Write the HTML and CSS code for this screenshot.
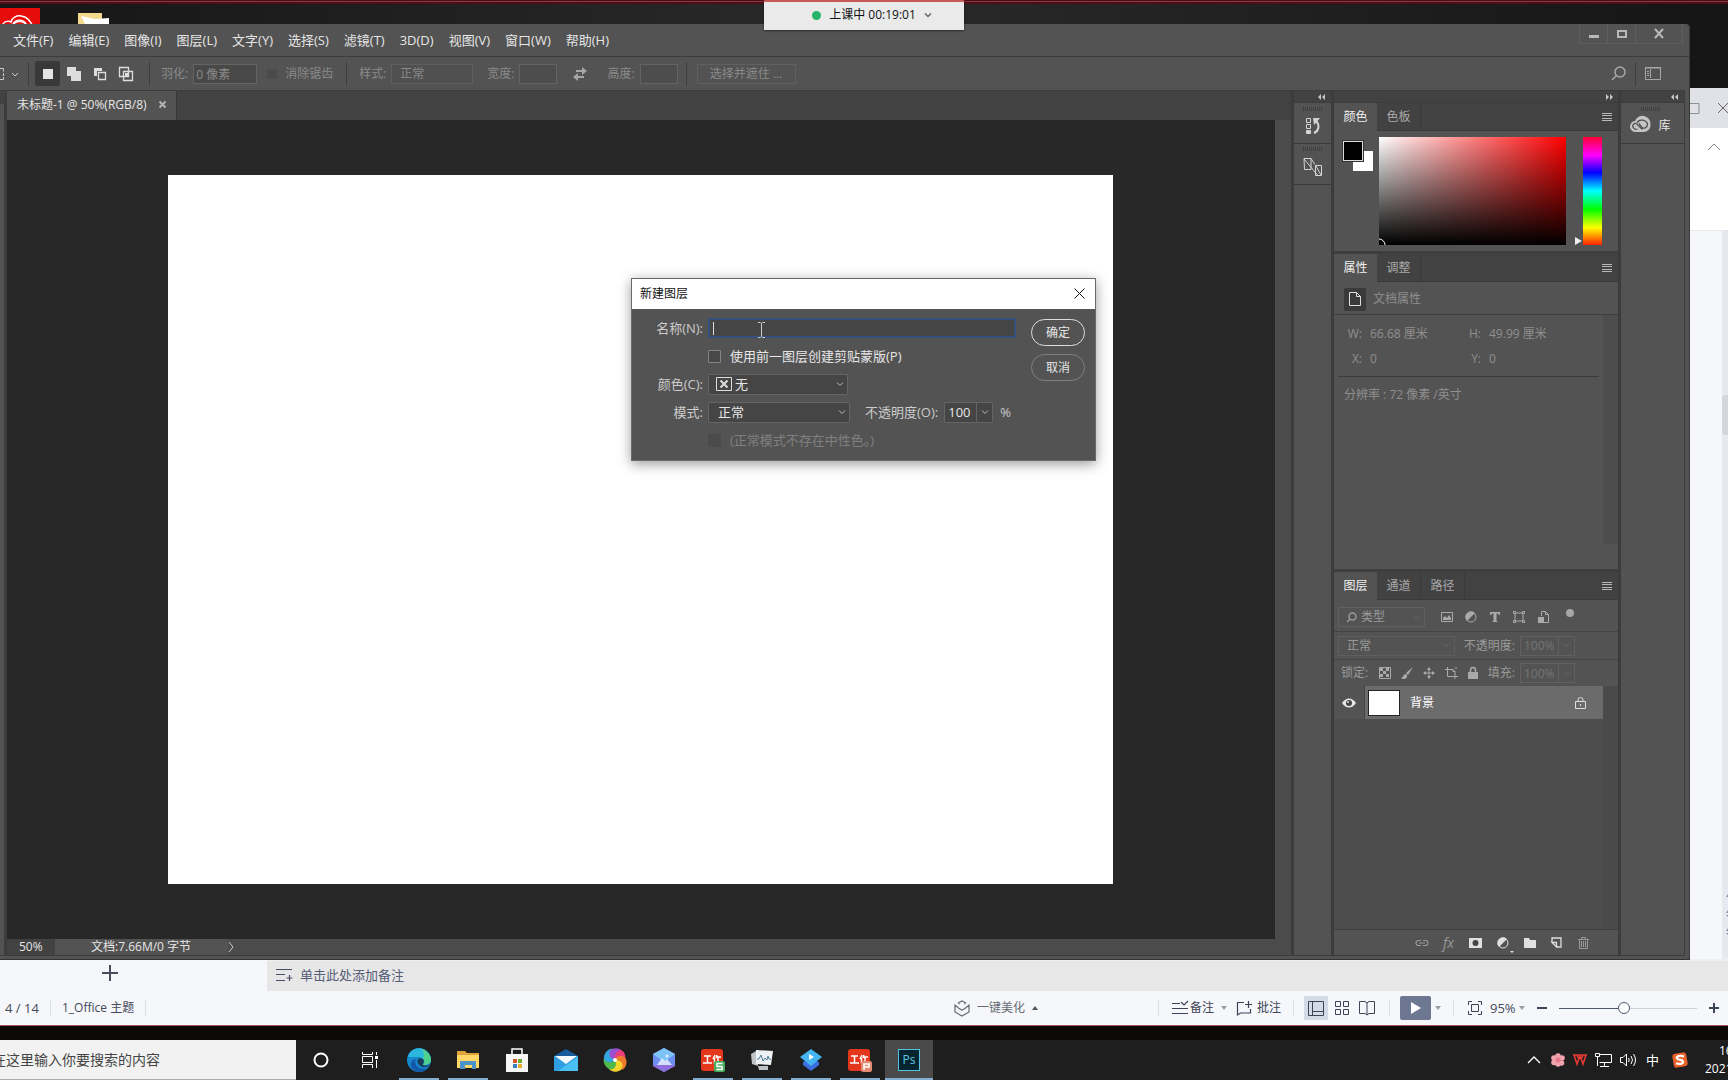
FILE: index.html
```html
<!DOCTYPE html>
<html lang="zh-CN">
<head>
<meta charset="utf-8">
<title>未标题-1 @ 50%(RGB/8)</title>
<link rel="stylesheet" href="styles.css">
</head>
<body>
<main class="desktop">
  <div class="desktop-icons">
    <svg class="app-tile" width="40" height="40" viewBox="0 0 40 40"><rect width="40" height="40" fill="#e60c0c"/><g fill="none" stroke="#fff" stroke-width="1.5"><path d="M2 18c2-6 8-5 9-4 2-9 18-9 22 6"/><path d="M3 20c3-4 7-4 9-1 3-8 14-7 17 2"/><path d="M13 16c3-5 10-5 13 0"/></g></svg>
    <svg class="folder-tile" width="32" height="32" viewBox="0 0 32 32"><path fill="#f3d98c" d="M0 4h24v24H0z"/><path fill="#fff" d="M3 7l14 3 14-1v20H14z"/></svg>
  </div>

  <section class="office">
    <header class="office-title">
      <svg width="38" height="40" viewBox="0 0 38 40" fill="none" stroke="#8b8f96"><path d="M-3 15.500h12v10H-3"/><path d="M28 15l10 10M28 25l10-10" stroke="#666"/></svg>
    </header>
    <div class="office-ribbon"><svg width="14" height="8" viewBox="0 0 14 8" fill="none" stroke="#80858c"><path d="M1 7l6-6 6 6"/></svg></div>
    <div class="office-main">
      <div class="office-scroll"><div class="office-thumb"></div><svg width="6" height="60" viewBox="0 0 6 60" fill="#8a93a3"><path d="M4 8l2-3v3zM4 24l2-3v3zM4 26h2v2zM4 42l2-3v3zM4 44h2v2z"/></svg></div>
    </div>
    <div class="office-notes">
      <button class="add-slide" aria-label="新建幻灯片"><svg width="16" height="16" viewBox="0 0 16 16" stroke="#474d5c" stroke-width="2"><path d="M8 0v16M0 8h16"/></svg></button>
      <div class="notes-field"><svg width="17" height="14" viewBox="0 0 17 14" fill="none" stroke="#474d66"><path d="M0 1.500h16M0 6.500h9M0 12.500h9M13.500 7v6M10.500 10h6" stroke-width="1.200"/></svg><span>单击此处添加备注</span></div>
    </div>
    <footer class="office-status">
      <div class="status-left"><span class="page-no">4 / 14</span><i class="bar"></i><span>1_Office 主题</span><i class="bar"></i></div>
      <button class="beautify"><svg width="16" height="17" viewBox="0 0 16 17" fill="none" stroke="#666b75" stroke-width="1.200"><path d="M1 5v7l7 4 7-4V5l-4 3.500-3 1.500-3-1.500zM4 3l4-2 4 2M4 3l2 1M12 3l-2 1"/></svg><span>一键美化</span><svg width="6" height="4" viewBox="0 0 6 4"><path fill="#555" d="M0 4l3-4 3 4z"/></svg></button>
      <div class="status-right">
        <i class="bar"></i>
        <button class="st-note"><svg width="17" height="14" viewBox="0 0 17 14" fill="none" stroke="#3d4458" stroke-width="1.200"><path d="M0 2.500h8M0 7.500h16M0 12.500h16M9 1l3 3 4-4"/></svg><span>备注</span><svg class="tri" width="6" height="4" viewBox="0 0 6 4"><path fill="#999ca3" d="M0 0h6L3 4z"/></svg></button>
        <button class="st-comment"><svg width="17" height="15" viewBox="0 0 17 15" fill="none" stroke="#3d4458" stroke-width="1.200"><path d="M8 1.500H1.500V14l3-2h10V8M12.500 0v7M9 3.500h7"/></svg><span>批注</span></button>
        <i class="bar"></i>
        <button class="view on" aria-label="普通视图"><svg width="16" height="15" viewBox="0 0 16 15" fill="none" stroke="#3d4458"><path d="M.5.5h15v14H.5zM4.500.5v14M4.500 10.500h11"/></svg></button>
        <button class="view" aria-label="幻灯片浏览"><svg width="14" height="14" viewBox="0 0 14 14" fill="none" stroke="#3d4458"><path d="M.5.5h5v5h-5zM8.500.5h5v5h-5zM.5 8.500h5v5h-5zM8.500 8.500h5v5h-5z"/></svg></button>
        <button class="view" aria-label="阅读视图"><svg width="16" height="15" viewBox="0 0 16 15" fill="none" stroke="#3d4458"><path d="M.5.5h5.500l2 1.500 2-1.500h5.500v12H10l-2 1.500L6 12.500H.5zM8 2v12"/></svg></button>
        <i class="bar"></i>
        <button class="play" aria-label="放映"><svg width="10" height="12" viewBox="0 0 10 12"><path fill="#fff" d="M0 0l10 6-10 6z"/></svg></button>
        <svg class="tri" width="6" height="4" viewBox="0 0 6 4"><path fill="#999ca3" d="M0 0h6L3 4z"/></svg>
        <i class="bar"></i>
        <button class="fit" aria-label="适应窗口"><svg width="14" height="14" viewBox="0 0 14 14" fill="none" stroke="#3d4458"><path d="M.5 4V.5H4M10 .5h3.500V4M13.500 10v3.500H10M4 13.500H.5V10M3.500 3.500h7v7h-7z"/></svg></button>
        <span class="zoom-text">95%</span>
        <svg class="tri" width="6" height="4" viewBox="0 0 6 4"><path fill="#999ca3" d="M0 0h6L3 4z"/></svg>
        <button class="zm" aria-label="缩小"><svg width="10" height="10" viewBox="0 0 10 10"><path stroke="#3d4458" stroke-width="2" d="M0 5h10"/></svg></button>
        <input class="zoom-range" type="range" min="0" max="100" value="47" aria-label="缩放">
        <button class="zm" aria-label="放大"><svg width="10" height="10" viewBox="0 0 10 10"><path stroke="#3d4458" stroke-width="2" d="M0 5h10M5 0v10"/></svg></button>
      </div>
    </footer>
  </section>

  <section class="ps">
    <header class="menubar">
      <nav class="menus">
        <button>文件(F)</button><button>编辑(E)</button><button>图像(I)</button><button>图层(L)</button><button>文字(Y)</button><button>选择(S)</button><button>滤镜(T)</button><button>3D(D)</button><button>视图(V)</button><button>窗口(W)</button><button>帮助(H)</button>
      </nav>
      <div class="win-buttons">
        <button class="wb" aria-label="最小化"><svg width="10" height="10" viewBox="0 0 10 10"><path fill="#b8b8b8" d="M0 6h10v3H0z"/></svg></button>
        <button class="wb" aria-label="最大化"><svg width="10" height="8" viewBox="0 0 10 8"><path fill="none" stroke="#b8b8b8" stroke-width="2" d="M1 1h8v6H1z"/></svg></button>
        <button class="wb wide" aria-label="关闭"><svg width="10" height="9" viewBox="0 0 10 9"><path stroke="#b8b8b8" stroke-width="2" d="M1 0l8 9M9 0L1 9"/></svg></button>
      </div>
    </header>

    <div class="options">
      <svg class="marquee" width="20" height="14" viewBox="0 0 20 14" fill="none" stroke="#ccc"><path d="M0 1.500h3.500v3M3.500 6v3M3.500 10v2.500H0"/><path d="M12 6l3 3 3-3"/></svg>
      <i class="sep"></i>
      <div class="modes">
        <button class="mode on" aria-label="新选区"><svg width="14" height="14" viewBox="0 0 14 14"><path fill="#e4e4e4" d="M2 2h10v10H2z"/></svg></button>
        <button class="mode" aria-label="添加到选区"><svg width="14" height="14" viewBox="0 0 14 14"><path fill="#ddd" d="M0 0h9v4h5v10H4V9H0z"/></svg></button>
        <button class="mode" aria-label="从选区减去"><svg width="14" height="14" viewBox="0 0 14 14"><path fill="#ddd" d="M1 1h8v3H4v5H1z"/><path fill="none" stroke="#ddd" stroke-width="1.300" d="M5.500 5.500h7v7h-7z"/></svg></button>
        <button class="mode" aria-label="与选区交叉"><svg width="14" height="14" viewBox="0 0 14 14"><path fill="none" stroke="#ddd" stroke-width="1.300" d="M.5.5h9v9h-9zM4.500 4.500h9v9h-9z"/><path fill="#ddd" d="M6 6h3v3H6z"/></svg></button>
      </div>
      <i class="sep"></i>
      <label class="opt first"><span>羽化:</span><input class="opt-in w64" value="0 像素" disabled></label>
      <label class="opt aa"><input type="checkbox" class="tick" disabled><span>消除锯齿</span></label>
      <i class="sep"></i>
      <label class="opt"><span>样式:</span><select class="opt-sel w80" disabled><option>正常</option></select></label>
      <label class="opt w"><span>宽度:</span><input class="opt-in w36" disabled></label>
      <svg class="swap" width="14" height="14" viewBox="0 0 14 14" fill="#a6a6a6"><path d="M3 3h6V0l5 4-5 4V5H3zM11 9H5V6L0 10l5 4v-3h6z"/></svg>
      <label class="opt h"><span>高度:</span><input class="opt-in w36" disabled></label>
      <i class="sep"></i>
      <button class="mask" disabled>选择并遮住 ...</button>
      <div class="opt-right">
        <svg width="15" height="15" viewBox="0 0 15 15" fill="none" stroke="#a8a8a8" stroke-width="1.500"><circle cx="9" cy="6" r="5"/><path d="M5.500 9.500L1 14"/></svg>
        <i class="sep"></i>
        <svg width="16" height="14" viewBox="0 0 16 14" fill="none" stroke="#a8a8a8"><path d="M.5.5h15v12H.5z"/><path d="M0 1h16M5.500 2v9M2 4.500h2M2 6.500h2M2 8.500h2"/></svg>
      </div>
    </div>

    <div class="workspace">
      <div class="tools-edge"></div>
      <div class="doc">
        <div class="doc-tabs"><button class="doc-tab">未标题-1 @ 50%(RGB/8)<svg width="7" height="7" viewBox="0 0 7 7"><path stroke="#b4b4b4" stroke-width="2" d="M.5.5l6 6M6.500.5l-6 6"/></svg></button></div>
        <div class="doc-view"><div class="canvas-area"><div class="paper"></div></div><div class="vscroll"></div></div>
        <div class="doc-status"><span class="pct">50%</span><span class="docsize">文档:7.66M/0 字节</span><svg width="6" height="10" viewBox="0 0 6 10" fill="none" stroke="#ccc"><path d="M1 0l4 5-4 5"/></svg></div>
      </div>

      <aside class="icon-dock">
        <div class="dock-head"><svg width="8" height="6" viewBox="0 0 8 6" fill="#c8c8c8"><path d="M3 0v6L0 3zM7 0v6L4 3z"/></svg></div>
        <button class="dock-btn" aria-label="历史记录"><i class="grip"></i><svg width="16" height="18" viewBox="0 0 16 18" fill="none" stroke="#d4d4d4"><path d="M1.500 1.500h4v4h-4zM1.500 7.500h4v4h-4z"/><path fill="#d4d4d4" d="M1.500 13.500h4v3h-4z"/><path d="M9 16c5-2 6-8 2-12" stroke-width="2"/><path fill="#d4d4d4" stroke="none" d="M8 1h7L9 8z"/></svg></button>
        <button class="dock-btn" aria-label="工具预设"><i class="grip"></i><svg width="20" height="20" viewBox="0 0 20 20" fill="none" stroke="#d4d4d4"><path d="M1 1.500h7v11H1.500z"/><path d="M1 2l11 13 3 3.500M8 1.500l4 6M12.500 8.500h6v10h-6zM13 9l5 9"/></svg></button>
      </aside>

      <aside class="panels">
        <div class="dock-head"><svg width="8" height="6" viewBox="0 0 8 6" fill="#c8c8c8"><path d="M1 0v6l3-3zM5 0v6l3-3z"/></svg></div>
        <section class="panel color-panel">
          <div class="tabs"><button class="tab on">颜色</button><button class="tab">色板</button><svg class="burger" width="10" height="8" viewBox="0 0 10 8"><path stroke="#b8b8b8" d="M0 .5h10M0 2.500h10M0 5.500h10M0 7.500h10"/></svg></div>
          <div class="color-body">
            <div class="swatches"><i class="bg"></i><i class="fg"></i></div>
            <div class="field"><svg width="8" height="8" viewBox="0 0 8 8"><circle cx="0" cy="8" r="6" fill="none" stroke="#fff"/></svg></div>
            <svg class="pointer" width="8" height="8" viewBox="0 0 8 8"><path fill="#eee" d="M1 0l7 4-7 4z"/></svg>
            <div class="hue"></div>
          </div>
        </section>
        <section class="panel prop-panel">
          <div class="tabs"><button class="tab on">属性</button><button class="tab">调整</button><svg class="burger" width="10" height="8" viewBox="0 0 10 8"><path stroke="#b8b8b8" d="M0 .5h10M0 2.500h10M0 5.500h10M0 7.500h10"/></svg></div>
          <div class="prop-head"><span class="doc-ico"><svg width="12" height="14" viewBox="0 0 12 14" fill="none" stroke="#ddd"><path d="M.5.5h7l4 4v9H.5zM7.500.5v4h4"/></svg></span><span>文档属性</span></div>
          <div class="prop-body">
            <div class="prop-info">
              <dl class="dims"><dt>W:</dt><dd>66.68 厘米</dd><dt>H:</dt><dd>49.99 厘米</dd><dt>X:</dt><dd>0</dd><dt>Y:</dt><dd>0</dd></dl>
              <p class="res">分辨率 : 72 像素 /英寸</p>
            </div>
            <div class="track"></div>
          </div>
        </section>
        <section class="panel layer-panel">
          <div class="tabs"><button class="tab on">图层</button><button class="tab">通道</button><button class="tab">路径</button><svg class="burger" width="10" height="8" viewBox="0 0 10 8"><path stroke="#b8b8b8" d="M0 .5h10M0 2.500h10M0 5.500h10M0 7.500h10"/></svg></div>
          <div class="lrow filter">
            <span class="kind"><svg width="11" height="11" viewBox="0 0 11 11" fill="none" stroke="#999" stroke-width="1.500"><circle cx="6.500" cy="4.500" r="3.500"/><path d="M4 7L1 10"/></svg><select class="dim-sel" aria-label="类型" disabled><option>类型</option></select></span>
            <div class="filter-icons">
              <svg width="12" height="12" viewBox="0 0 12 12"><path fill="none" stroke="#aaa" d="M.5 1.500h11v9H.5z"/><path fill="#aaa" d="M2 9V7l2-2 2 2 2-3 2 3v2z"/></svg>
              <svg width="12" height="12" viewBox="0 0 12 12"><circle cx="6" cy="6" r="5" fill="none" stroke="#aaa"/><path fill="#aaa" d="M10 2A5.500 5.500 0 1 0 2 10z"/></svg>
              <svg width="12" height="12" viewBox="0 0 12 12"><path fill="#aaa" d="M1 1h10v3h-1L9 2.500H7.500V10l1.500 1H3l1.500-1V2.500H3L2 4H1z"/></svg>
              <svg width="12" height="12" viewBox="0 0 12 12" fill="none" stroke="#aaa"><path d="M2 2h8v8H2z"/><path fill="#535353" d="M.5.5h2v2h-2zM9.500.5h2v2h-2zM.5 9.500h2v2h-2zM9.500 9.500h2v2h-2z"/></svg>
              <svg width="12" height="14" viewBox="0 0 12 14"><path fill="none" stroke="#aaa" d="M4.500 6V1.500h4l3 3v8H7M8.500 1.500v3h3"/><path fill="#aaa" d="M1 7h6v6H1z"/></svg>
            </div>
            <i class="dot"></i>
          </div>
          <div class="lrow blend">
            <select class="dim-sel mode-sel" aria-label="混合模式" disabled><option>正常</option></select>
            <label class="pc"><span>不透明度:</span><input value="100%" disabled><i></i></label>
          </div>
          <div class="lrow locks">
            <span class="lock-label">锁定:</span>
            <div class="lock-icons">
              <svg width="12" height="12" viewBox="0 0 12 12"><path fill="none" stroke="#aaa" d="M.5.5h11v11H.5z"/><path fill="#aaa" d="M1 1h3v3H1zM7 1h3v3H7zM4 4h3v3H4zM1 7h3v3H1zM7 7h3v3H7z"/></svg>
              <svg width="12" height="12" viewBox="0 0 12 12" fill="#aaa"><path d="M12 0L5 6l2 2zM5 7c-3 0-2 3-5 4 2 2 7 1 6-3z"/></svg>
              <svg width="12" height="12" viewBox="0 0 12 12"><path stroke="#aaa" d="M6 1v10M1 6h10"/><path fill="#aaa" d="M6 0l2 3H4zM6 12l2-3H4zM0 6l3-2v4zM12 6L9 4v4z"/></svg>
              <svg width="13" height="12" viewBox="0 0 13 12" fill="none" stroke="#aaa"><path d="M0 2.500h8l2 2V12M2.500 0v9.500H13M11 0v2M8 2.500v2h2"/></svg>
              <svg width="10" height="12" viewBox="0 0 10 12"><path fill="#aaa" d="M0 5h10v7H0z"/><path fill="none" stroke="#aaa" stroke-width="1.500" d="M2.500 6V3a2.500 2.500 0 0 1 5 0v3"/></svg>
            </div>
            <label class="pc"><span>填充:</span><input value="100%" disabled><i></i></label>
          </div>
          <div class="layer-list">
            <div class="layers">
              <div class="layer">
                <button class="eye" aria-label="可见性"><svg width="14" height="10" viewBox="0 0 14 10"><path fill="#e6e6e6" d="M0 5c4-6 10-6 14 0-4 6-10 6-14 0z"/><circle cx="7" cy="5" r="3" fill="#444"/><circle cx="6" cy="4" r="1" fill="#ddd"/></svg></button>
                <div class="layer-main"><i class="thumb"></i><span>背景</span><svg width="11" height="12" viewBox="0 0 11 12" fill="none" stroke="#ddd"><path d="M.5 4.500h10v7H.5zM3 4.500V3a2.500 2.500 0 0 1 5 0v1.500M5.500 7v2"/></svg></div>
              </div>
            </div>
            <div class="track"></div>
          </div>
          <div class="layer-tools">
            <button aria-label="链接"><svg width="14" height="8" viewBox="0 0 14 8" fill="none" stroke="#999" stroke-width="1.200"><path d="M6 6.500H3.500a2.500 2.500 0 0 1 0-5H6M8 1.500h2.500a2.500 2.500 0 0 1 0 5H8M4 4h6"/></svg></button>
            <button class="fx">fx</button>
            <button aria-label="蒙版"><svg width="13" height="10" viewBox="0 0 13 10"><path fill="#e0e0e0" d="M0 0h13v10H0z"/><circle cx="6.500" cy="5" r="3" fill="#444"/></svg></button>
            <button aria-label="调整图层"><svg width="12" height="16" viewBox="0 0 12 16"><circle cx="6" cy="8" r="5" fill="none" stroke="#e0e0e0"/><path fill="#e0e0e0" d="M10 4A5.500 5.500 0 1 0 2 12zM13 16h4l-2 2z"/></svg></button>
            <button aria-label="新建组"><svg width="12" height="10" viewBox="0 0 12 10"><path fill="#e0e0e0" d="M0 0h5l1 2h6v8H0z"/></svg></button>
            <button aria-label="新建图层"><svg width="11" height="11" viewBox="0 0 11 11"><path fill="none" stroke="#e0e0e0" stroke-width="1.300" d="M1 5V1h9v9H6M1 5.500h4.500V10z"/></svg></button>
            <button aria-label="删除"><svg width="11" height="12" viewBox="0 0 11 12" fill="none" stroke="#999"><path d="M0 2.500h11M3.500 2V.5h4V2M1.500 3v8.500h8V3M3.500 4v6M5.500 4v6M7.500 4v6"/></svg></button>
          </div>
        </section>
      </aside>

      <aside class="lib-dock">
        <div class="dock-head"><svg width="8" height="6" viewBox="0 0 8 6" fill="#c8c8c8"><path d="M3 0v6L0 3zM7 0v6L4 3z"/></svg></div>
        <button class="dock-btn lib"><i class="grip"></i><span><svg width="21" height="16" viewBox="0 0 21 16"><path fill="#c4c4c4" d="M6 15a5.500 5.500 0 0 1-1-11 8 8 0 0 1 15.500 3A7 7 0 0 1 14 15z"/><g fill="none" stroke="#505050" stroke-width="1.300"><path d="M13 12c-4 0-5-7-8.500-5.500-3.500 2-1 7 3 5.500"/><path d="M7 6c2-5 10-3 10.500 1.500 0 3-4 5-6 2.500L9 6.500"/></g></svg>库</span></button>
      </aside>
    </div>
  </section>

  <form class="dialog">
    <header class="dlg-title"><h1>新建图层</h1><button type="button" aria-label="关闭"><svg width="11" height="11" viewBox="0 0 11 11"><path stroke="#111" d="M.5.5l10 10M10.500.5l-10 10"/></svg></button></header>
    <div class="dlg-body">
      <div class="dlg-fields">
        <div class="frow"><label for="n">名称(N):</label><input id="n" class="name-in"></div>
        <div class="frow"><span class="lead"></span><input type="checkbox" id="clip" class="dtick"><label for="clip" class="after">使用前一图层创建剪贴蒙版(P)</label></div>
        <div class="frow"><label for="c">颜色(C):</label><span class="selwrap"><svg class="none-ico" width="16" height="14" viewBox="0 0 16 14"><path fill="none" stroke="#ddd" d="M.5.5h15v13H.5z"/><path stroke="#ddd" stroke-width="2" d="M4.500 3.500l7 7M11.500 3.500l-7 7"/></svg><select id="c" class="dsel color"><option>无</option></select></span></div>
        <div class="frow"><label for="m">模式:</label><select id="m" class="dsel"><option>正常</option></select><label for="o" class="op-label">不透明度(O):</label><span class="combo"><input id="o" value="100"><i></i></span><span class="percent">%</span></div>
        <div class="frow off"><span class="lead"></span><input type="checkbox" id="neutral" class="dtick" disabled><label for="neutral" class="after">(正常模式不存在中性色。)</label></div>
      </div>
      <div class="dlg-actions"><button type="button" class="ok">确定</button><button type="button">取消</button></div>
    </div>
    <svg class="ibeam" width="7" height="16" viewBox="0 0 7 16" fill="none" stroke="#ccc"><path d="M0 .5h2.500l1 1 1-1H7M3.500 1v14M0 15.500h2.500l1-1 1 1H7"/></svg>
  </form>

  <button class="class-pill"><i></i><span>上课中 00:19:01</span><svg width="8" height="5" viewBox="0 0 8 5" fill="none" stroke="#666" stroke-width="1.500"><path d="M1 .5l3 3 3-3"/></svg></button>
</main>

<footer class="taskbar">
  <div class="search"><input aria-label="搜索" value="在这里输入你要搜索的内容"></div>
  <div class="apps">
    <button class="app" aria-label="Cortana"><svg width="16" height="16" viewBox="0 0 16 16"><circle cx="8" cy="8" r="6.500" fill="none" stroke="#fff" stroke-width="2"/></svg></button>
    <button class="app" aria-label="任务视图"><svg width="17" height="16" viewBox="0 0 17 16" fill="none" stroke="#fff"><path d="M.5 0v2.500h10V0M.5 4.500h10v6H.5zM.5 16v-3.500h10V16M14.500 0v3M14.500 8v8"/><path fill="#fff" stroke="none" d="M13 4h3v3h-3z"/></svg></button>
    <button class="app run" aria-label="Edge"><svg width="24" height="24" viewBox="0 0 24 24"><circle cx="12" cy="12" r="12" fill="#1787d0"/><path fill="#2bb6dd" d="M1 9C3 1 12-2 18 2c4 3 6 6 6 10 0 3-3 5-8 5 2-3 0-8-5-8-4 0-8 0-10 0z"/><path fill="#4fd08c" d="M14 1c6 1 10 6 10 11 0 3-3 5-8 5 2-2 2-5 0-7 2-3 1-6-2-9z"/><path fill="#1459a8" d="M9 11c-3 6 4 12 12 9-6 8-19 3-17-5 1-3 3-4 5-4z"/><path fill="#1b2b3a" d="M11 11c3-2 6 0 6 2 0 1-1 2-1 4 2 1 5 1 7-1-1 2-2 3-4 3-6 1-10-4-8-8z" opacity=".8"/></svg></button>
    <button class="app run" aria-label="文件资源管理器"><svg width="22" height="20" viewBox="0 0 22 20"><path fill="#e0a33a" d="M0 1h8l2 2h12v15H0z"/><path fill="#ffd766" d="M0 5h22v13H0z"/><path fill="#4b93c8" d="M3 19v-8h16v8h-4v-4H8v4z"/></svg></button>
    <button class="app" aria-label="应用商店"><svg width="24" height="24" viewBox="0 0 24 24"><path fill="none" stroke="#fff" stroke-width="1.500" d="M7 6V1h10v5"/><path fill="#f6f6f6" d="M1 6h22v18H1z"/><path fill="#d8542c" d="M8 11h4v4H8z"/><path fill="#73a837" d="M13 11h4v4h-4z"/><path fill="#3583bb" d="M8 16h4v4H8z"/><path fill="#e6ad32" d="M13 16h4v4h-4z"/></svg></button>
    <button class="app" aria-label="邮件"><svg width="24" height="22" viewBox="0 0 24 22"><path fill="#175b9c" d="M0 7l12-7 12 7v3H0z"/><path fill="#2f9ee2" d="M0 7h24v15H0z"/><path fill="#49c0f0" d="M24 8v14H4z"/><path fill="#f4faff" d="M1 7h22l-11 8z"/></svg></button>
    <button class="app" aria-label="色轮"><svg width="24" height="24" viewBox="0 0 24 24"><path fill="#ea3f7b" d="M12 12C8 5 12 0 18 2c4 2 5 6 4 9-3-3-7-3-10 1z"/><path fill="#ef7a2d" d="M12 12c3-6 9-5 11-1 2 6-2 10-4 11 0-5-3-9-7-10z"/><path fill="#f7d52d" d="M12 12c8 0 9 6 6 10-5 3-9 2-12-1 5-1 7-5 6-9z"/><path fill="#52b848" d="M12 12c3 7-2 11-6 9-5-3-6-8-5-11 2 4 6 6 11 2z"/><path fill="#33a8e0" d="M12 12c-6 5-12 1-11-3 1-6 6-9 9-8-3 4-2 8 2 11z"/><path fill="#9b4fd0" d="M12 12C5 10 5 3 9 1c5-2 8 0 9 1-5 1-7 5-6 10z"/><circle cx="12" cy="12" r="2" fill="#fff"/></svg></button>
    <button class="app" aria-label="图库"><svg width="22" height="24" viewBox="0 0 22 24"><path fill="#6f8fee" d="M11 0l11 6v12l-11 6-11-6V6z"/><path fill="#7ec3f7" d="M11 0l11 6-11 8L0 6z"/><path fill="#8f6fe0" d="M0 17h22v1l-11 6-11-6z"/><path fill="#e6edff" d="M4 17l5-7 3 3 2-2 5 6z" opacity=".85"/><circle cx="14" cy="8" r="1.500" fill="#e6edff"/></svg></button>
    <button class="app run" aria-label="WPS 表格"><svg width="24" height="24" viewBox="0 0 24 24"><rect y="1" width="22" height="22" rx="3" fill="#e5371b"/><path stroke="#fff" stroke-width="1.500" fill="none" d="M3 8h7M6.500 8v7M2 15h9M14 7l-2 4M13.500 10v6M16 7l-1 3M15 9h5M17 9v6"/><rect x="13" y="13" width="11" height="11" rx="2" fill="#48ae5b"/><path fill="none" stroke="#fff" stroke-width="1.500" d="M21.500 15.500H16v3h5v3h-5.500"/></svg></button>
    <button class="app run" aria-label="任务管理器"><svg width="24" height="22" viewBox="0 0 24 22"><path fill="#bfc3c6" d="M1 5l7-4v16l-6-2zM8 17h10v4H9z"/><path fill="#eef2f4" d="M6 1l17 1-2 14-15-1z"/><path fill="none" stroke="#4f7f9a" d="M7 10h2l2-4 2 6 2-3 2 2 1-4 1 3h2"/></svg></button>
    <button class="app run" aria-label="教学客户端"><svg width="22" height="22" viewBox="0 0 22 22"><path fill="#3b6fe0" d="M3 13l8-3 8 3v3l-8 6-8-6z"/><path fill="#44b5ee" d="M11 0l11 8-11 9L0 8z"/><path fill="#fff" d="M9 5l5 3-5 3z"/></svg></button>
    <button class="app run" aria-label="WPS 演示"><svg width="24" height="24" viewBox="0 0 24 24"><rect y="1" width="22" height="22" rx="3" fill="#e5371b"/><path stroke="#fff" stroke-width="1.500" fill="none" d="M3 8h7M6.500 8v7M2 15h9M14 7l-2 4M13.500 10v6M16 7l-1 3M15 9h5M17 9v6"/><rect x="13" y="13" width="11" height="11" rx="2" fill="#e58a72"/><path fill="none" stroke="#fff" stroke-width="1.500" d="M16 22v-6h5v3h-5"/></svg></button>
    <button class="app run active"><span class="ps-logo">Ps</span></button>
  </div>
  <div class="tray">
    <svg class="more" width="14" height="8" viewBox="0 0 14 8" fill="none" stroke="#fff" stroke-width="1.300"><path d="M1 7l6-6 6 6"/></svg>
    <svg width="14" height="14" viewBox="0 0 14 14" fill="#f1a4ae"><circle cx="7" cy="3" r="2.800"/><circle cx="11" cy="5" r="2.800"/><circle cx="10.500" cy="10" r="2.800"/><circle cx="7" cy="11" r="2.800"/><circle cx="3" cy="9.500" r="2.800"/><circle cx="3" cy="5" r="2.800"/><circle cx="7" cy="7" r="2.500" fill="#e9788a"/></svg>
    <svg width="14" height="12" viewBox="0 0 14 12" fill="none" stroke="#e23b35" stroke-width="1.600"><path d="M0 1h14M1 1l3 9 3-8 3 8 3-9M4 1l2 5M10 1L8 6"/></svg>
    <svg width="17" height="14" viewBox="0 0 17 14" fill="none" stroke="#fff"><path d="M4 1.500h12.500v8H4.500M9.500 10v3M5 13.500h9M.5.5h4v3h-4zM2.500 4v9"/></svg>
    <svg width="17" height="14" viewBox="0 0 17 14" fill="none" stroke="#fff"><path d="M.5 4.500H3L6.500 1v12L3 9.500H.5zM8.500 5q1.500 2 0 4M11 3q3 4 0 8M13.500 1q4 6 0 12"/></svg>
    <span class="ime">中</span>
    <svg class="sogou" width="16" height="16" viewBox="0 0 16 16"><rect x="1" y="1" width="14" height="14" rx="3" fill="#e8622b" transform="rotate(-10 8 8)"/><path fill="none" stroke="#fff" stroke-width="2.200" d="M12 4.500C8 3 4 4 5 6.500c1 1.500 6 1 6 3.500 0 2-4 2.500-7 1.200"/></svg>
    <div class="clock"><span>16</span><span>2021</span></div>
  </div>
</footer>
</body>
</html>
```
FILE: styles.css
```css
* { box-sizing: border-box; }
body {
  margin: 0;
  min-height: 100vh;
  display: flex;
  flex-direction: column;
  overflow: hidden;
  font: 13px/18px "Open Sans", "Noto Sans CJK SC", sans-serif;
  color: #e6e6e6;
}
button, input, select { font: inherit; color: inherit; margin: 0; padding: 0; border: 0; background: none; border-radius: 0; min-width: 0; }
button { display: flex; align-items: center; justify-content: center; white-space: nowrap; }
select { appearance: none; opacity: 1; }
input:disabled, select:disabled, button:disabled { color: inherit; opacity: 1; }
svg { display: block; flex: none; overflow: visible; }
i { display: block; flex: none; }
span, label { white-space: nowrap; }

/* Desktop */
.desktop {
  flex: 1;
  position: relative;
  overflow: hidden;
  background: linear-gradient(#4a0f18 0 1px, #8e3440 1px 2px, #4a0f18 2px 4px, transparent 4px), linear-gradient(90deg, #161616, #2a2a2a 50%, #151515);
}
.desktop-icons { display: flex; gap: 38px; padding-top: 8px; }
.folder-tile { margin-top: 1px; }

/* Presentation window, behind */
.office {
  position: absolute;
  inset: 88px 0 0 0;
  display: flex;
  flex-direction: column;
  background: #f5f7fa;
  border-bottom: 14px solid #0b0808;
  color: #444a5a;
}
.office-title { height: 40px; background: #e0e2e7; display: flex; justify-content: flex-end; }
.office-ribbon { height: 102px; background: #fff; display: flex; justify-content: flex-end; padding: 15px 7px 0 0; }
.office-main { flex: 1; display: flex; justify-content: flex-end; border-top: 1px solid #e6e8ec; }
.office-scroll { width: 6px; background: #e6eaf0; display: flex; flex-direction: column; justify-content: space-between; padding: 164px 0 10px; }
.office-thumb { height: 40px; background: #d3d6db; border-radius: 3px 0 0 3px; }
.office-notes { height: 32px; display: flex; }
.add-slide { width: 267px; padding: 0 47px 4px 0; }
.notes-field { flex: 1; background: #e7e7e7; display: flex; align-items: center; gap: 7px; padding: 0 9px 2px; color: #555c75; border-top: 2px solid #f0f0f0; }
.office-status { height: 35px; display: flex; align-items: center; border-bottom: 1px solid #a8545c; font-size: 12px; padding-right: 9px; }
.office-status .bar { width: 1px; height: 16px; background: #dcdfe5; }
.status-left { display: flex; align-items: center; gap: 11px; font-size: 12px; width: 954px; padding-left: 5px; }
.page-no { width: 34px; font-size: 13px; }
.beautify { gap: 7px; color: #666b75; }
.status-right { display: flex; align-items: center; margin-left: auto; }
.st-note { gap: 1px; margin-left: 13px; color: #3d4458; }
.st-note .tri { margin-left: 6px; }
.st-comment { gap: 4px; margin: 0 12px 0 9px; color: #3d4458; }
.view { width: 24px; height: 24px; margin-right: 1px; }
.view.on { background: #d5dbe6; margin: 0 2px 0 10px; }
.status-right .view + .bar { margin: 0 10px 0 9px; }
.play { width: 31px; height: 24px; background: #6d7792; border-radius: 2px; margin-right: 4px; }
.play + .tri + .bar { margin: 0 14px 0 12px; }
.zoom-text { font-size: 13px; width: 27px; margin: 0 2px 0 8px; }
.zm { width: 10px; height: 20px; margin-left: 12px; }
.zoom-range { appearance: none; width: 138px; height: 14px; margin-left: 12px; background: linear-gradient(90deg, #50596e 47%, #cfd3da 47%) center / 100% 1px no-repeat; }
.zoom-range::-webkit-slider-thumb { appearance: none; width: 12px; height: 12px; border-radius: 50%; background: #fff; border: 1px solid #50596e; }

/* Photoshop window */
.ps {
  position: absolute;
  inset: 24px 38px 80px 0;
  display: flex;
  flex-direction: column;
  background: #535353;
  border-radius: 0 4px 0 0;
  border-right: 1px solid #3a3a3a;
  border-bottom: 1px solid #333;
}
.menubar { height: 33px; display: flex; justify-content: space-between; border-bottom: 1px solid #3c3c3c; }
.menus { display: flex; gap: 15px; padding-left: 13px; align-items: center; }
.win-buttons { display: flex; height: 20px; margin-right: 6px; border: 1px solid #5e5e5e; border-top: 0; }
.wb { width: 28px; border-right: 1px solid #5e5e5e; }
.wb.wide { width: 46px; border: 0; }
.options { height: 34px; display: flex; align-items: center; color: #8a8a8a; font-size: 12px; border-bottom: 1px solid #3c3c3c; margin-right: 4px; }
.sep { width: 1px; height: 24px; background: #3f3f3f; }
.marquee { margin-right: 8px; }
.modes { display: flex; padding: 0 11px 0 6px; gap: 1px; }
.mode { width: 25px; height: 25px; }
.mode.on { background: #393939; border-radius: 2px; }
.opt { display: flex; align-items: center; gap: 5px; margin-left: 12px; }
.opt.first { margin-left: 11px; }
.opt.w { margin-left: 14px; }
.opt-in { height: 20px; border: 1px solid #636363; background: #4d4d4d; padding: 0 2px; color: #717171; }
.w64 { width: 64px; background: #484848; }
.w36 { width: 38px; }
.w80 { width: 82px; }
.opt-sel { height: 20px; border: 1px solid #5e5e5e; padding: 0 8px; background: #505050; }
.opt.aa { gap: 8px; margin: 0 13px 0 10px; }
.tick { appearance: none; width: 10px; height: 10px; background: #4b4b4b; }
.swap { margin: 0 8px 0 16px; }
.opt.h { margin-right: 8px; }
.mask { width: 99px; height: 20px; border: 1px solid #606060; margin-left: 10px; color: #9a9a9a; }
.opt-right { display: flex; align-items: center; margin-left: auto; gap: 9px; padding-right: 24px; }

.workspace { flex: 1; display: flex; background: #535353; margin-bottom: 3px; margin-right: 4px; border-bottom: 1px solid #3c3c3c; min-height: 0; }
.tools-edge { width: 7px; border-right: 3px solid #3c3c3c; border-top: 13px solid #424242; }
.doc { flex: 1; min-width: 0; display: flex; flex-direction: column; }
.doc-tabs { height: 29px; background: #424242; display: flex; }
.doc-tab { background: #535353; padding: 0 10px 2px; gap: 12px; border-right: 1px solid #383838; font-size: 12px; }
.doc-view { flex: 1; display: flex; min-height: 0; }
.canvas-area { flex: 1; background: #282828; display: flex; padding: 55px 162px 55px 161px; }
.paper { flex: 1; background: #fff; }
.vscroll { width: 16px; background: #4b4b4b; }
.doc-status { height: 16px; display: flex; align-items: center; background: #4b4b4b; font-size: 12px; line-height: 16px; }
.pct { width: 48px; background: #424242; padding-left: 12px; }
.docsize { width: 173px; padding-left: 36px; background: #535353; }

.icon-dock, .panels, .lib-dock { border-left: 3px solid #3c3c3c; display: flex; flex-direction: column; }
.icon-dock { width: 40px; }
.panels { width: 287px; }
.lib-dock { width: 67px; border-right: 1px solid #3c3c3c; }
.dock-head { height: 12px; background: #424242; display: flex; align-items: center; justify-content: flex-end; padding-right: 5px; border-bottom: 1px solid #3c3c3c; }
.dock-btn { height: 41px; flex-direction: column; gap: 6px; padding-bottom: 5px; border-bottom: 1px solid #3a3a3a; }
.grip { width: 20px; height: 4px; background: repeating-linear-gradient(90deg, #404040 0 1px, transparent 1px 2px); }
.dock-btn span { display: flex; gap: 7px; }
.dock-btn.lib { font-size: 12px; padding-right: 4px; }

/* Panels */
.tabs { height: 28px; background: #424242; display: flex; align-items: stretch; font-size: 12px; color: #a8a8a8; border-bottom: 1px solid #3a3a3a; padding-right: 6px; }
.tab { width: 44px; border-right: 1px solid #3a3a3a; }
.tab.on { width: 43px; background: #535353; color: #f0f0f0; height: 28px; border-right: 0; }
.burger { margin: 10px 0 0 auto; }
.panel { display: flex; flex-direction: column; }
.color-panel, .prop-panel { border-bottom: 3px solid #3e3e3e; }
.color-body { display: flex; align-items: flex-end; padding: 6px 16px 6px 9px; height: 120px; }
.swatches { position: relative; width: 36px; height: 108px; }
.swatches i { position: absolute; width: 20px; height: 20px; }
.swatches .fg { left: 0; top: 4px; background: #000; border: 1px solid #ddd; outline: 1px solid #333; }
.swatches .bg { left: 10px; top: 14px; background: #fff; }
.field { flex: 1; height: 108px; display: flex; align-items: flex-end; background: linear-gradient(transparent, #000), linear-gradient(90deg, #fff, #f00); overflow: hidden; }
.pointer { margin: 0 1px 0 8px; }
.hue { width: 19px; height: 108px; background: linear-gradient(#f03, #f0f 17%, #00f 33%, #0ff 50%, #0f0 67%, #ff0 84%, #f20); }

.prop-panel { height: 318px; color: #8f8f8f; font-size: 12px; }
.prop-head { height: 33px; display: flex; align-items: center; gap: 7px; padding: 2px 0 0 10px; border-bottom: 1px solid #3e3e3e; }
.doc-ico { width: 22px; height: 23px; background: #3a3a3a; display: flex; align-items: center; justify-content: center; border-radius: 2px; }
.prop-body { display: flex; height: 229px; }
.prop-info { flex: 1; padding: 6px 4px 0; }
.track { width: 15px; background: #4d4d4d; }
.dims { margin: 0; height: 56px; display: grid; grid-template-columns: 24px 78px 25px 1fr; column-gap: 8px; align-content: start; line-height: 25px; border-bottom: 1px solid #3c3c3c; }
.dims dt { text-align: right; }
.dims dd { margin: 0; }
.res { margin: 9px 0 0 6px; }

.layer-panel { flex: 1; font-size: 12px; }
.lrow { display: flex; align-items: center; border-bottom: 1px solid #434343; padding-left: 4px; color: #9a9a9a; }
.filter { height: 32px; padding-top: 3px; }
.blend { height: 28px; justify-content: space-between; padding-right: 43px; }
.locks { height: 26px; padding-left: 7px; padding-right: 43px; justify-content: space-between; border: 0; }
.kind { width: 87px; height: 20px; border: 1px solid #606060; display: flex; align-items: center; gap: 4px; padding-left: 7px; }
.dim-sel { flex: 1; height: 18px; line-height: 18px; background: url("data:image/svg+xml,%3Csvg xmlns='http://www.w3.org/2000/svg' width='8' height='5'%3E%3Cpath d='M1 .5l3 3 3-3' fill='none' stroke='%23666'/%3E%3C/svg%3E") right 3px center no-repeat; }
.mode-sel { flex: none; width: 117px; height: 20px; border: 1px solid #5e5e5e; padding-left: 8px; }
.filter-icons { display: flex; gap: 12px; margin-left: 16px; align-items: center; }
.dot { width: 8px; height: 8px; border-radius: 50%; background: #a6a6a6; margin: 0 0 8px 17px; }
.pc { display: flex; align-items: center; }
.pc span { margin-right: 5px; }
.pc input { width: 39px; height: 20px; border: 1px solid #606060; padding-left: 3px; color: #757575; }
.pc i { width: 16px; height: 20px; border: 1px solid #606060; border-left: 0; background: url("data:image/svg+xml,%3Csvg xmlns='http://www.w3.org/2000/svg' width='8' height='5'%3E%3Cpath d='M1 .5l3 3 3-3' fill='none' stroke='%23666'/%3E%3C/svg%3E") center no-repeat; }
.lock-icons { display: flex; gap: 10px; align-items: center; }
.layer-list { flex: 1; display: flex; background: #4d4d4d; border-bottom: 1px solid #3f3f3f; }
.layers { flex: 1; }
.layer { display: flex; height: 33px; }
.eye { width: 31px; background: #535353; border-right: 1px solid #444; }
.layer-main { flex: 1; display: flex; align-items: center; background: #6b6b6b; padding: 0 17px 0 3px; gap: 10px; color: #fff; }
.thumb { width: 32px; height: 26px; background: #fff; border: 1px solid #222; }
.layer-main svg { margin-left: auto; }
.layer-list .track { background: #4a4a4a; }
.layer-tools { height: 25px; display: flex; align-items: center; justify-content: flex-end; padding-right: 21px; }
.layer-tools button { width: 27px; height: 24px; }
.layer-tools .fx { font-size: 14px; font-style: italic; color: #999; }

/* Dialog */
.dialog {
  position: absolute;
  left: calc(50% - 233px);
  top: 278px;
  width: 465px;
  border: 1px solid #6a6a6a;
  background: #535353;
  box-shadow: 0 3px 12px rgba(0, 0, 0, .4);
}
.dlg-title { height: 30px; background: #fff; color: #111; display: flex; align-items: center; justify-content: space-between; padding: 0 10px 1px 8px; }
.dlg-title h1 { margin: 0; font-size: 12px; font-weight: 400; }
.dlg-body { display: flex; justify-content: space-between; padding: 5px 10px 6px 0; }
.frow { display: flex; align-items: center; height: 28px; }
.frow > label:first-child, .lead { width: 71px; margin-right: 5px; text-align: right; color: #ccc; }
.name-in { width: 308px; height: 20px; border: 2px solid #35507a; padding: 0 3px; background: linear-gradient(#ddd, #ddd) 3px center / 1px 13px no-repeat, #454545; }
.dtick { appearance: none; width: 13px; height: 13px; border: 1px solid #858585; background: #484848; border-radius: 1px; }
.after { margin-left: 9px; }
.off { color: #808080; }
.off .dtick { border-color: #4b4b4b; background: #4b4b4b; }
.dsel, .combo { height: 21px; border: 1px solid #646464; background: #454545; border-radius: 1px; }
.dsel { width: 142px; padding: 0 9px; background: #454545 url("data:image/svg+xml,%3Csvg xmlns='http://www.w3.org/2000/svg' width='8' height='5'%3E%3Cpath d='M1 .5l3 3 3-3' fill='none' stroke='%23bbb'/%3E%3C/svg%3E") right 3px center no-repeat; }
.selwrap { position: relative; }
.selwrap .dsel { width: 140px; padding-left: 26px; }
.none-ico { position: absolute; left: 8px; top: 3px; }
.op-label { margin: 0 6px 0 15px; color: #ccc; }
.combo { display: flex; width: 49px; }
.combo input { width: 32px; padding-left: 3px; border-right: 1px solid #646464; }
.combo i { flex: 1; background: url("data:image/svg+xml,%3Csvg xmlns='http://www.w3.org/2000/svg' width='8' height='5'%3E%3Cpath d='M1 .5l3 3 3-3' fill='none' stroke='%23bbb'/%3E%3C/svg%3E") center no-repeat; }
.percent { margin-left: 7px; color: #ccc; }
.dlg-actions { display: flex; flex-direction: column; gap: 8px; padding-top: 5px; }
.dlg-actions button { width: 54px; height: 27px; border: 1px solid #808080; border-radius: 14px; font-size: 12px; }
.dlg-actions .ok { border-color: #ddd; }
.ibeam { position: absolute; left: 126px; top: 43px; }

/* Class timer */
.class-pill { position: absolute; left: calc(50% - 100px); top: 0; width: 200px; height: 30px; padding: 0 0 2px 16px; background: #eaeaea; color: #111; gap: 8px; font-size: 12px; border-top: 2px solid #c75b5b; box-shadow: 0 1px 2px rgba(0, 0, 0, .5); }
.class-pill i { width: 9px; height: 9px; border-radius: 50%; background: #27b568; }

/* Taskbar */
.taskbar { height: 40px; display: flex; background: #1e1e1e; color: #fff; overflow: hidden; }
.search { width: 296px; background: #f2f2f2; overflow: hidden; border-bottom: 1px solid #aaa; display: flex; }
.search input { margin-left: -8px; width: 304px; color: #444; font-size: 14px; }
.apps { display: flex; gap: 1px; padding-left: 1px; }
.app { width: 48px; border-bottom: 2px solid transparent; padding-top: 2px; }
.run { background: linear-gradient(#84add0, #84add0) center bottom / 40px 2px no-repeat; background-origin: border-box; background-clip: border-box; }
.app.active { background: #4a4a4a; border-color: #84add0; }
.ps-logo { width: 22px; height: 22px; border: 1px solid #4fc3e0; background: #062430; color: #5cc8e4; font-size: 12px; line-height: 20px; }
.tray { margin-left: auto; display: flex; align-items: center; gap: 8px; }
.more { margin-right: 2px; }
.ime { font-size: 13px; width: 15px; text-align: center; }
.sogou { margin-left: 4px; }
.clock { width: 23px; margin-left: 9px; font-size: 12px; display: flex; flex-direction: column; line-height: 18px; overflow: hidden; }
.clock span:first-child { padding-left: 14px; }
```
